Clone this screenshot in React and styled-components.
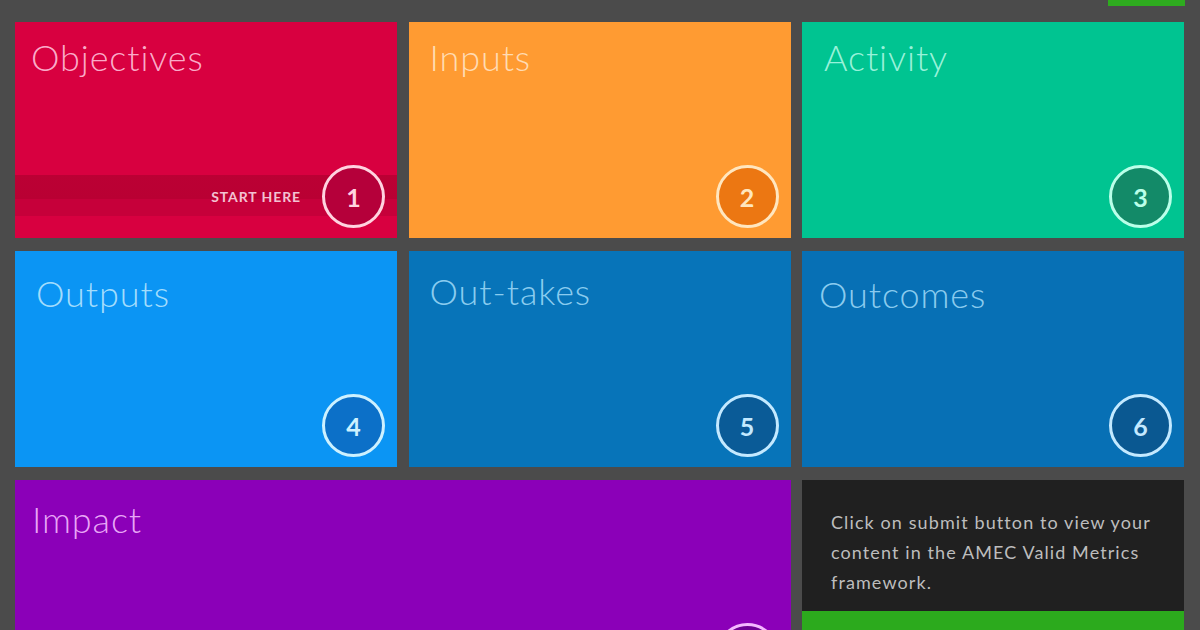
import React from "react";
import styled, { createGlobalStyle } from "styled-components";

const GlobalStyle = createGlobalStyle`
  html, body {
    margin: 0;
    padding: 0;
    background: #4b4b4b;
    overflow: hidden;
  }
  body {
    font-family: Lato, "Open Sans", "Liberation Sans", sans-serif;
  }
`;

const tiles = [
  {
    id: 1,
    title: "Objectives",
    bg: "#d80040",
    ink: "rgba(255, 195, 220, 0.9)",
    disc: "#b5003a",
    ring: "#ffd3e0",
    top: 14,
    left: 16,
    band: true,
  },
  {
    id: 2,
    title: "Inputs",
    bg: "#ff9b32",
    ink: "rgba(255, 232, 205, 0.85)",
    disc: "#ec7712",
    ring: "#ffe6bf",
    top: 14,
    left: 21,
  },
  {
    id: 3,
    title: "Activity",
    bg: "#00c491",
    ink: "rgba(195, 255, 238, 0.8)",
    disc: "#138a68",
    ring: "#baffe9",
    top: 14,
    left: 22,
  },
  {
    id: 4,
    title: "Outputs",
    bg: "#0b95f4",
    ink: "rgba(205, 240, 255, 0.8)",
    disc: "#0c70c8",
    ring: "#cdf1ff",
    top: 21,
    left: 21,
  },
  {
    id: 5,
    title: "Out-takes",
    bg: "#0774b9",
    ink: "rgba(175, 228, 255, 0.8)",
    disc: "#0a5b97",
    ring: "#c3e9ff",
    top: 19,
    left: 21,
  },
  {
    id: 6,
    title: "Outcomes",
    bg: "#0770b5",
    ink: "rgba(175, 228, 255, 0.8)",
    disc: "#0a5891",
    ring: "#c3e9ff",
    top: 22,
    left: 17,
  },
];

const App = () => {
  return (
    <>
      <GlobalStyle />
      <Page>
        <TopBar>
          <SubmitTab />
        </TopBar>
        <Grid>
          {tiles.map((t) => (
            <Tile key={t.id} $bg={t.bg}>
              <Title $ink={t.ink} $top={t.top} $left={t.left}>
                {t.title}
              </Title>
              <Footer $band={t.band}>
                {t.band && <StartLabel>START HERE</StartLabel>}
                <Step $disc={t.disc} $ring={t.ring}>
                  {t.id}
                </Step>
              </Footer>
            </Tile>
          ))}
          <Tile $bg="#8b00b8" $wide>
            <Title $ink="rgba(245, 190, 255, 0.9)" $top={18} $left={17}>
              Impact
            </Title>
            <Footer>
              <Step $disc="#6e0094" $ring="#f4b8ff">
                7
              </Step>
            </Footer>
          </Tile>
          <SubmitColumn>
            <Note>
              Click on submit button to view your content in the AMEC Valid
              Metrics framework.
            </Note>
            <SubmitButton />
          </SubmitColumn>
        </Grid>
      </Page>
    </>
  );
};

const Page = styled.div`
  width: 1200px;
  height: 630px;
  padding: 0 15px;
  box-sizing: border-box;
  overflow: hidden;
`;

const TopBar = styled.div`
  height: 22px;
  display: flex;
  justify-content: flex-end;
  align-items: flex-start;
`;

const SubmitTab = styled.div`
  width: 77px;
  height: 6px;
  background: #2eab1f;
`;

const Grid = styled.div`
  display: grid;
  grid-template-columns: repeat(3, 382px);
  grid-auto-rows: 216px;
  column-gap: 11.5px;
  row-gap: 13px;
`;

const Tile = styled.div`
  background: ${({ $bg }) => $bg};
  grid-column: ${({ $wide }) => ($wide ? "span 2" : "auto")};
  display: flex;
  flex-direction: column;
  justify-content: space-between;
  box-sizing: border-box;
  padding-bottom: 10px;
`;

const Title = styled.h2`
  margin: 0;
  padding: ${({ $top }) => $top}px 0 0 ${({ $left }) => $left}px;
  font-size: 36px;
  line-height: 42px;
  font-weight: 300;
  color: ${({ $ink }) => $ink};
  letter-spacing: 0.9px;
`;

const Footer = styled.div`
  height: 63px;
  display: flex;
  align-items: center;
  justify-content: flex-end;
  padding-right: 12px;
  background: ${({ $band }) =>
    $band
      ? "linear-gradient(to bottom, transparent 10px, #bb0034 10px, #b90033 34px, #c6003a 34px, #c6003a 51px, transparent 51px)"
      : "none"};
`;

const StartLabel = styled.span`
  font-size: 14px;
  font-weight: 700;
  color: #f3c2d2;
  letter-spacing: 0.9px;
  margin-right: 21px;
`;

const Step = styled.div`
  width: 63px;
  height: 63px;
  box-sizing: border-box;
  border-radius: 50%;
  border: 3px solid ${({ $ring }) => $ring};
  background: ${({ $disc }) => $disc};
  color: ${({ $ring }) => $ring};
  display: flex;
  align-items: center;
  justify-content: center;
  font-size: 25px;
  font-weight: 700;
`;

const SubmitColumn = styled.div`
  display: flex;
  flex-direction: column;
`;

const Note = styled.p`
  margin: 0;
  height: 131px;
  box-sizing: border-box;
  background: #202020;
  padding: 27px 14px 0 29px;
  font-size: 18px;
  line-height: 30px;
  letter-spacing: 1.1px;
  color: #bdbdbd;
`;

const SubmitButton = styled.div`
  flex: 1;
  background: #2caa1d;
`;

export default App;
